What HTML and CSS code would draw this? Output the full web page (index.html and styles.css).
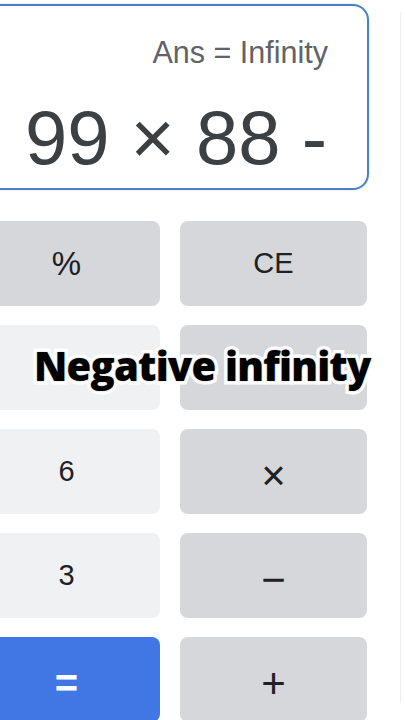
FILE: index.html
```html
<!DOCTYPE html>
<html lang="en">
<head>
    <meta charset="UTF-8">
    <meta name="viewport" content="width=device-width, initial-scale=1.0">
    <title>Calculator</title>
    <link rel="stylesheet" href="styles.css">
</head>
<body>
    <div class="page">
        <div class="calc">
            <div class="display">
                <div class="ans">Ans = Infinity</div>
                <div class="expr">99 &times; 88 -</div>
            </div>
            <div class="keys">
                <button class="key op pct">%</button>
                <button class="key op">CE</button>
                <button class="key num" aria-label="9"></button>
                <button class="key op" aria-label="divide"></button>
                <button class="key num">6</button>
                <button class="key op sym">&times;</button>
                <button class="key num">3</button>
                <button class="key op sym">&minus;</button>
                <button class="key eq sym">=</button>
                <button class="key op sym">+</button>
            </div>
        </div>
        <div class="side"></div>
    </div>
    <div class="caption">Negative infinity</div>
</body>
</html>
```

FILE: styles.css
```css
html, body {
    margin: 0;
    padding: 0;
    background-color: #fff;
    overflow: hidden;
}
body {
    font-family: "Liberation Sans", Arial, sans-serif;
    width: 405px;
    height: 720px;
    position: relative;
}
.page {
    display: flex;
    align-items: flex-start;
}
.calc {
    width: 396px;
    flex-shrink: 0;
    margin-left: -27px;
    padding-top: 4px;
}
.display {
    height: 186px;
    box-sizing: border-box;
    border: 2px solid #4b80c6;
    border-radius: 16px;
    box-shadow: 0 0 2px rgba(75, 128, 198, 0.35);
    text-align: right;
    padding: 31px 39px 0 0;
    color: #3c4043;
}
.ans {
    font-size: 30.5px;
    line-height: 30px;
    color: #606368;
}
.expr {
    font-size: 76px;
    line-height: 77px;
    margin-top: 32px;
    margin-right: 1px;
}
.keys {
    display: grid;
    grid-template-columns: 187px 187px;
    grid-auto-rows: 85px;
    column-gap: 20px;
    row-gap: 19px;
    margin-top: 31px;
}
.key {
    border: none;
    border-radius: 8px;
    font-family: inherit;
    font-size: 29px;
    color: #202124;
    display: flex;
    align-items: center;
    justify-content: center;
    padding: 0;
}
.key.op {
    background-color: #d5d7db;
}
.key.num {
    background-color: #f0f1f3;
}
.key.eq {
    background-color: #4077e4;
    color: #fff;
    font-weight: bold;
}
.key.pct {
    font-size: 33px;
}
.key.sym {
    font-size: 42px;
    padding-top: 8px;
}
.key.eq.sym {
    font-weight: bold;
    font-size: 40px;
}
.side {
    flex-shrink: 0;
    margin-left: 31px;
    margin-top: 12px;
    height: 691px;
    border-left: 1px solid #f3eaf3;
}
.caption {
    position: absolute;
    left: 34px;
    top: 338px;
    font-family: "Open Sans", sans-serif;
    font-weight: 800;
    font-size: 40px;
    letter-spacing: -0.8px;
    color: #000;
    -webkit-text-stroke: 7px #fff;
    paint-order: stroke fill;
    text-shadow: 0 0 2px rgba(0, 0, 0, 0.25);
    white-space: nowrap;
}
```
